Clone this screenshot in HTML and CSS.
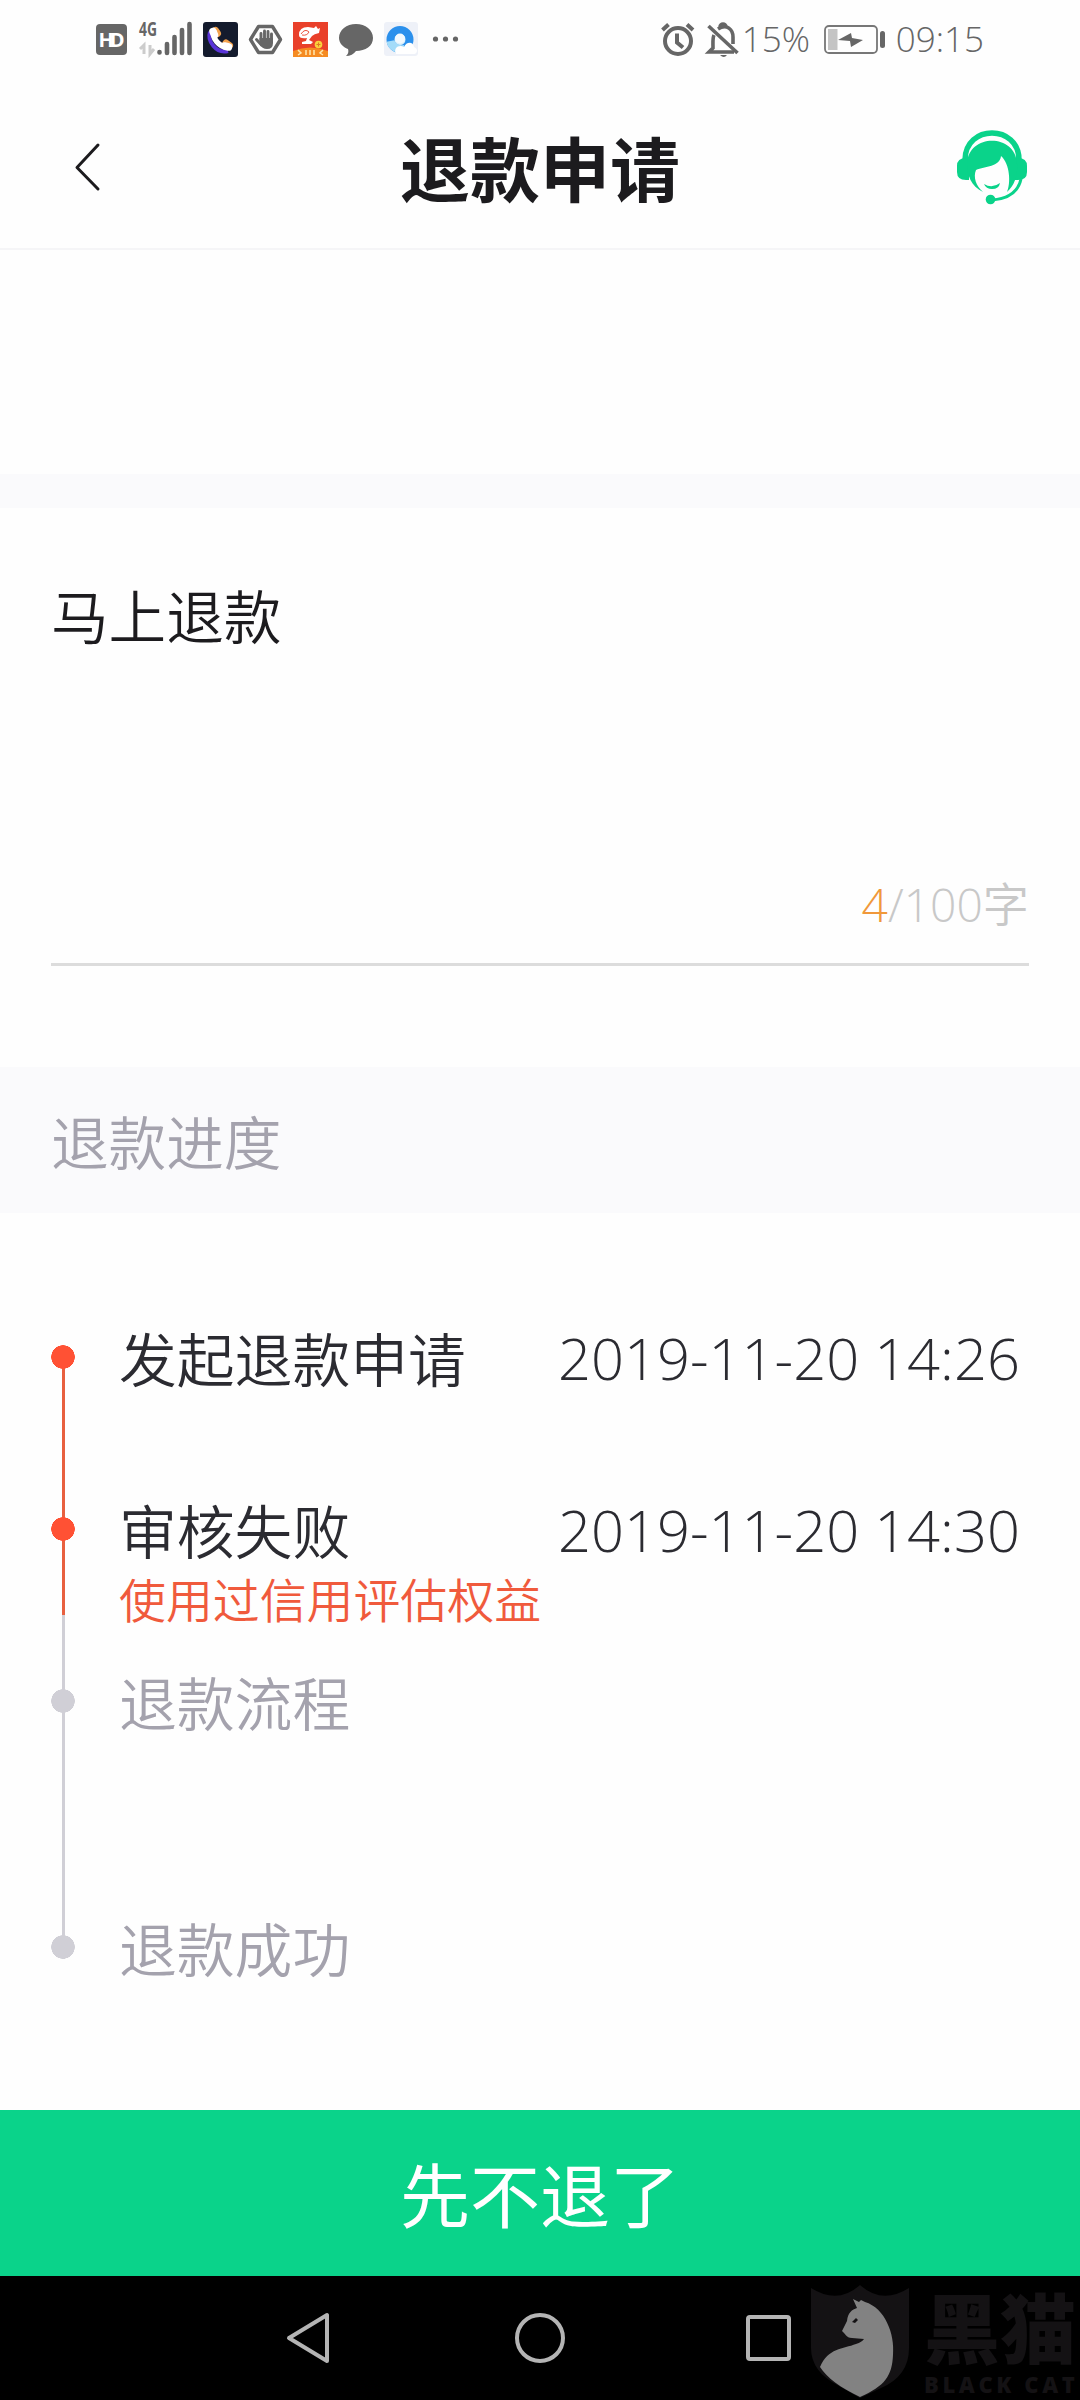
FILE: index.html
```html
<!DOCTYPE html>
<html lang="zh-CN">
<head>
    <meta charset="UTF-8">
    <title>退款申请</title>
    <link rel="stylesheet" href="styles.css">
</head>
<body>

<div class="status-bar">
    <svg class="status-left" width="400" height="80" viewBox="0 0 400 80">
        <rect x="16" y="24" width="31" height="31" rx="4" fill="#666"/>
        <text class="hd" x="18.500" y="46.500" textLength="26">HD</text>
        <text class="net" x="59" y="36" textLength="18" lengthAdjust="spacingAndGlyphs">4G</text>
        <path d="M60 49l4-4v9M70 45v9l4-5" fill="none" stroke="#ccc" stroke-width="3"/>
        <path d="M79.500 52v0.500M87 44v9M94.500 37v16M102 30v23M109.500 24v29" stroke="#666" stroke-width="4.600" stroke-linecap="round"/>
        <!-- phone -->
        <rect x="123" y="22" width="35" height="35" rx="3" fill="#141b2d"/>
        <path d="M130 32c-3 9 6 22 18 19" fill="none" stroke="#5a35d8" stroke-width="4"/>
        <path d="M135.500 30.500l2 3M146 43l3.500 2.500" fill="none" stroke="#f3a24e" stroke-width="7" stroke-linecap="round"/>
        <path d="M134 32c-2 6 5 15 13 15" fill="none" stroke="#fff" stroke-width="5.500" stroke-linecap="round"/>
        <path d="M133 31.500l1.500 3.500M144.500 46l4 1" fill="none" stroke="#fff" stroke-width="7.500" stroke-linecap="round"/>
        <!-- hand stop -->
        <path d="M178.500 26.500h14l8 13l-8 13h-14l-8-13z" fill="none" stroke="#666" stroke-width="3.400" stroke-linejoin="round"/>
        <path d="M181 40v-6.500M184.500 40v-9M188 40v-8.500M191.500 40v-6M176.500 39.500l5 5.500" stroke="#666" stroke-width="2.900" stroke-linecap="round"/>
        <path d="M179.500 38h13.500v5q0 6-6 6q-5 0-7.500-5z" fill="#666"/>
        <!-- shopping app -->
        <rect x="213" y="22" width="35" height="35" fill="#e9402a"/>
        <path d="M213 51q17-7 35 0v6h-35z" fill="#f58b22"/>
        <path d="M219 35q0-8 9-8l6 1l2-2l2 3l2-1l-1 5q-5 1-7 3l-3 4l4 2l-2 2h-9v-2l4-1l1-3q-8 1-8-3z" fill="#fff"/>
        <path d="M221 34q4-6 8-2q-2 4-7 3" fill="none" stroke="#e9402a" stroke-width="0.900"/>
        <circle cx="238.500" cy="44.500" r="3.800" fill="#f9d13c"/>
        <path d="M236.500 44.500h4M238.500 42.500v4" stroke="#e07a20"/>
        <path d="M226 50v5M230 50v5M234 50v5M218 50l3 3l-3 2M243 50l-3 3l3 2" stroke="#ffe9b0" stroke-width="1.500" fill="none"/>
        <!-- chat -->
        <path d="M276 24c9.500 0 17 6 17 14s-7.500 13-17 13c-2 3-6 5-10 5c2-2 3-4 2-7c-5-2-9-6-9-11c0-8 7.500-14 17-14z" fill="#666"/>
        <!-- browser -->
        <rect x="304" y="22" width="34" height="34" rx="3" fill="#eef1f8"/>
        <circle cx="320" cy="39.500" r="9.500" fill="#d9effc" stroke="#2b90ec" stroke-width="8"/>
        <path d="M310.500 41c1 6 7 9 14 8" fill="none" stroke="#a4dcf9" stroke-width="8"/>
        <circle cx="320" cy="38.500" r="5" fill="#f2f9fe"/>
        <path d="M316 54c-3-6 3-10 8-7c2-5 9-6 10 0c5 2 3 7 0 7z" fill="#fff"/>
        <circle cx="355.500" cy="39" r="2.600" fill="#666"/>
        <circle cx="365.500" cy="39" r="2.600" fill="#666"/>
        <circle cx="375.500" cy="39" r="2.600" fill="#666"/>
    </svg>
    <div class="status-right">
        <svg width="84" height="40" viewBox="0 0 84 40">
            <g fill="none" stroke="#666" stroke-width="4">
                <circle cx="20" cy="21" r="13"/>
                <path d="M19 13.500v9l6 5"/>
                <path d="M4.500 10l6-5.500M29 4.500l6 5.500"/>
            </g>
            <g fill="none" stroke="#666" stroke-width="3.600">
                <path d="M56 15c-1.500 3-1 7-1 13l-4 4h25M60 9c9-6 15 1 15 8v7M62 7c0-4 6-4 6 0"/>
                <path d="M50.500 6l29 27"/>
            </g>
            <path d="M62 35h7q-3 4-7 0z" fill="#666"/>
        </svg>
        <span class="percent">15%</span>
        <svg width="62" height="32" viewBox="0 0 62 32">
            <rect x="1" y="2" width="52" height="27" rx="4" fill="none" stroke="#777" stroke-width="1.800"/>
            <rect x="4" y="5" width="9.500" height="21" fill="#c4c4c4"/>
            <path d="M14 16l13-7l1 5l11 2l-12 7l-1-6z" fill="#666"/>
            <rect x="56" y="7" width="5" height="17" rx="2.500" fill="#666"/>
        </svg>
        <span class="time">09:15</span>
    </div>
</div>

<div class="header">
    <svg class="back" width="30" height="52" viewBox="0 0 30 52">
        <path d="M25 4L4 26.500L25 48" fill="none" stroke="#1c1b1e" stroke-width="3" stroke-linecap="round" stroke-linejoin="round"/>
    </svg>
    <h1>退款申请</h1>
    <svg class="service" width="72" height="76" viewBox="0 0 72 76">
        <path d="M9 31C9-5 63-5 63 31" fill="none" stroke="#0ad38a" stroke-width="5.500"/>
        <path d="M10 29h3v22h-3q-9 0-9-8v-6q0-8 9-8zM62 29h-3v22h3q9 0 9-8v-6q0-8-9-8z" fill="#0ad38a"/>
        <path d="M11 35C12 4 60 4 61 35C62 47 58 57 51 63C55 54 54 35 45 27C44 38 29 37 20 41C17 48 20 57 27 63C15 57 11 46 11 35z" fill="#0ad38a"/>
        <path d="M28 55q8 5 16-1q-1 6-8 6q-6 0-8-5z" fill="#0ad38a"/>
        <path d="M65 50C62 64 50 70 36 71" fill="none" stroke="#0ad38a" stroke-width="3"/>
        <circle cx="34.500" cy="70.500" r="4.800" fill="#0ad38a"/>
    </svg>
</div>

<div class="spacer"></div>

<div class="reason">
    <div class="reason-text">马上退款</div>
    <div class="counter"><span>4</span>/100字</div>
</div>

<div class="section-title">退款进度</div>

<div class="timeline">
    <div class="step done first">
        <div class="track"></div>
        <div class="label">发起退款申请</div>
        <div class="date">2019-11-20 14:26</div>
    </div>
    <div class="step done failed">
        <div class="track"></div>
        <div class="label">审核失败
            <div class="note">使用过信用评估权益</div>
        </div>
        <div class="date">2019-11-20 14:30</div>
    </div>
    <div class="step long">
        <div class="track"></div>
        <div class="label">退款流程</div>
    </div>
    <div class="step last">
        <div class="track"></div>
        <div class="label">退款成功</div>
    </div>
</div>

<button type="button" class="cancel-button">先不退了</button>

<div class="nav-bar">
    <svg width="54" height="54" viewBox="0 0 54 54">
        <path d="M43 4v46L5 27z" fill="none" stroke="#b4b4b4" stroke-width="4" stroke-linejoin="round"/>
    </svg>
    <svg width="54" height="54" viewBox="0 0 54 54">
        <circle cx="27" cy="27" r="23" fill="none" stroke="#b4b4b4" stroke-width="4"/>
    </svg>
    <svg width="54" height="54" viewBox="0 0 54 54">
        <rect x="6" y="6" width="41" height="42" rx="2" fill="none" stroke="#b4b4b4" stroke-width="4"/>
    </svg>
    <div class="watermark">
        <svg width="98" height="114" viewBox="0 0 98 114">
            <path d="M0 3q27 17 49-3q22 20 49 3v60q0 28-28 40l-21 10l-21-12q-28-14-28-38z" fill="#141214"/>
            <path d="M42 14l6 3l2-2l4 2C74 23 84 49 82 70C81 91 74 101 49 112C30 103 16 93 9 82C17 63 32 64 45 59Q51 57 53 54L41 53C35 53 34 48 31 46L36 36C37 27 41 25 46 23z" fill="#828282"/>
            <path d="M41 37l4-4l2 2l-3 3z" fill="#141214"/>
        </svg>
        <div class="watermark-text">
            <div class="cn">黑猫</div>
            <div class="en">BLACK CAT</div>
        </div>
    </div>
</div>

</body>
</html>
```

FILE: styles.css
```css
* {
    box-sizing: border-box;
}
body {
    margin: 0;
    width: 1080px;
    height: 2400px;
    display: flex;
    flex-direction: column;
    overflow: hidden;
    background-color: #fefefe;
    font-family: "Open Sans", "Noto Sans CJK SC", sans-serif;
    font-weight: 350;
    color: #2b2b31;
}
svg {
    display: block;
    flex: none;
}

/* status bar */
.status-bar {
    height: 80px;
    flex: none;
    display: flex;
    justify-content: space-between;
    padding: 0 96px 0 80px;
    color: #666;
    font-size: 35px;
    font-weight: 300;
}
.status-right {
    display: flex;
    align-items: center;
    height: 79px;
}
.percent {
    width: 82px;
    white-space: nowrap;
    line-height: 36px;
    padding-bottom: 2px;
}
.time {
    margin-left: 10px;
    white-space: nowrap;
    line-height: 36px;
    padding-bottom: 2px;
}
.hd {
    font: bold 20px "Open Sans", sans-serif;
    fill: #fff;
}
.net {
    font: bold 19px "Open Sans", sans-serif;
    fill: #666;
}

/* title bar */
.header {
    height: 170px;
    flex: none;
    display: flex;
    align-items: center;
    justify-content: space-between;
    padding: 6px 52px 0 73px;
    border-bottom: 2px solid #f5f5f7;
}
.back {
    margin-right: 21px;
}
.header h1 {
    margin: 0;
    padding-top: 5px;
    font-size: 70px;
    line-height: 100px;
    font-weight: bold;
    color: #1c1b1e;
}

.spacer {
    height: 258px;
    flex: none;
    border-bottom: 34px solid #fafafc;
}

/* refund reason */
.reason {
    height: 458px;
    flex: none;
    margin: 0 51px 101px;
    display: flex;
    flex-direction: column;
    justify-content: space-between;
    padding: 67px 0 20px;
    border-bottom: 3px solid #dcdcdc;
}
.reason-text {
    font-size: 57.600px;
    line-height: 84px;
    color: #1c1b1e;
}
.counter {
    font-size: 46.200px;
    line-height: 76px;
    text-align: right;
    color: #c8c8c8;
}
.counter span {
    color: #f0983a;
}

.section-title {
    height: 146px;
    flex: none;
    padding-left: 51px;
    background-color: #fafafc;
    font-size: 57.600px;
    line-height: 151px;
    color: #a4a2ad;
}

/* refund progress */
.timeline {
    height: 897px;
    flex: none;
    padding-top: 132px;
}
.step {
    height: 172px;
    display: flex;
    color: #a4a2ad;
    font-size: 57.800px;
    line-height: 29px;
}
.step.done {
    color: #2b2b31;
}
.step.long {
    height: 246px;
}
.track {
    width: 24px;
    margin: 0 44px 0 51px;
    background: radial-gradient(circle 12px at 12px 12px, #d0cfd6 11.500px, transparent 12px), linear-gradient(#d0cfd6, #d0cfd6) 11px 0 / 3px 100% no-repeat;
}
.done .track {
    background: radial-gradient(circle 12px at 12px 12px, #ff5134 11.500px, transparent 12px), linear-gradient(#e8603f, #e8603f) 11px 0 / 3px 100% no-repeat;
}
.failed .track {
    background: radial-gradient(circle 12px at 12px 12px, #ff5134 11.500px, transparent 12px), linear-gradient(#e8603f 98px, #d0cfd6 98px) 11px 0 / 3px 100% no-repeat;
}
.last .track {
    height: 24px;
}
.first .track {
    background-position: 0 0, 11px 12px;
}
.label {
    width: 439px;
    white-space: nowrap;
}
.note {
    margin-top: 40px;
    font-size: 46.900px;
    color: #f05a3c;
}
.date {
    white-space: nowrap;
    font-weight: 300;
    font-size: 57.800px;
    line-height: 26px;
}

.cancel-button {
    height: 166px;
    flex: none;
    border: none;
    background-color: #0ad38a;
    color: #fff;
    font-family: inherit;
    font-size: 70px;
    font-weight: 400;
    cursor: pointer;
}

/* system navigation */
.nav-bar {
    height: 124px;
    flex: none;
    display: flex;
    align-items: center;
    gap: 175px;
    padding-left: 284px;
    background-color: #000;
    position: relative;
}
.watermark {
    position: absolute;
    left: 811px;
    top: 9px;
    display: flex;
    gap: 15px;
    color: #141214;
    white-space: nowrap;
}
.cn {
    font-size: 76px;
    line-height: 76px;
    margin: 6px 0 6px;
    font-weight: 900;
}
.en {
    font-size: 22px;
    line-height: 22px;
    font-weight: 800;
    letter-spacing: 3.600px;
}
```
